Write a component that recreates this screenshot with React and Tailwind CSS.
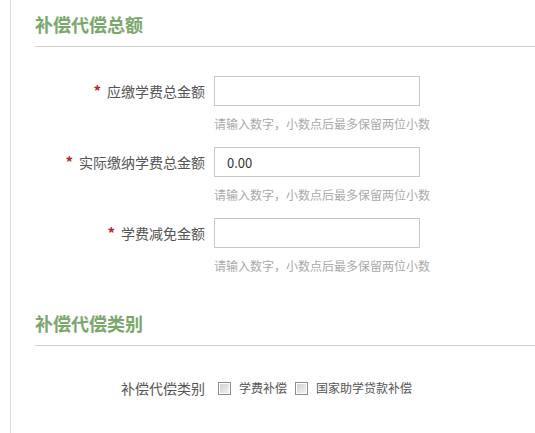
import { useState } from "react";

const fields = [
  { label: "应缴学费总金额", value: "" },
  { label: "实际缴纳学费总金额", value: "0.00" },
  { label: "学费减免金额", value: "" },
];

function Section({ title }) {
  return (
    <h2 className="text-[18px] leading-[24px] font-bold text-[#7aa86c] pb-[10px] border-b border-[#cfcfcf]">
      {title}
    </h2>
  );
}

function Box({ label }) {
  const [checked, setChecked] = useState(false);
  return (
    <label className="flex items-center cursor-pointer">
      <input
        type="checkbox"
        checked={checked}
        onChange={(e) => setChecked(e.target.checked)}
        className="appearance-none w-[13px] h-[13px] border border-[#8c8c8c] bg-gradient-to-br from-[#cfcfcf] to-[#f5f5f5] shadow-[inset_0_0_0_1px_#ffffff] checked:from-[#7aa86c] checked:to-[#a9cf9b]"
      />
      <span className="ml-[8px] text-[12px] text-[#555]">{label}</span>
    </label>
  );
}

function App() {
  const [values, setValues] = useState(fields.map((f) => f.value));

  return (
    <div
      className="min-h-screen bg-white"
      style={{ fontFamily: '"Noto Sans CJK SC", "Liberation Sans", sans-serif' }}
    >
      <div className="ml-[10px] border-l border-[#dcdcdc] min-h-screen pl-[24px] pt-[12px]">
        <Section title="补偿代偿总额" />

        <div className="pt-[29px]">
          {fields.map((f, i) => (
            <div key={f.label} className="flex mb-[14px]">
              <div className="w-[179px] shrink-0 pr-[9px] h-[30px] flex items-center justify-end text-[14px] text-[#555]">
                <span className="text-[#b02a2a] text-[15px] font-bold mr-[6px]">*</span>
                {f.label}
              </div>
              <div>
                <input
                  type="text"
                  value={values[i]}
                  onChange={(e) => {
                    const next = [...values];
                    next[i] = e.target.value;
                    setValues(next);
                  }}
                  className="block w-[206px] h-[30px] border border-[#c8c8c8] px-[12px] text-[13px] text-[#333] outline-none"
                />
                <p className="mt-[9px] text-[12px] leading-[18px] text-[#aaaaaa]">
                  请输入数字，小数点后最多保留两位小数
                </p>
              </div>
            </div>
          ))}
        </div>

        <div className="pt-[22px]">
          <Section title="补偿代偿类别" />
        </div>

        <div className="flex items-center h-[20px] mt-[32px]">
          <div className="w-[183px] shrink-0 pr-[13px] text-right text-[14px] text-[#555]">
            补偿代偿类别
          </div>
          <div className="flex items-center gap-[8px]">
            <Box label="学费补偿" />
            <Box label="国家助学贷款补偿" />
          </div>
        </div>
      </div>
    </div>
  );
}

export default App;
